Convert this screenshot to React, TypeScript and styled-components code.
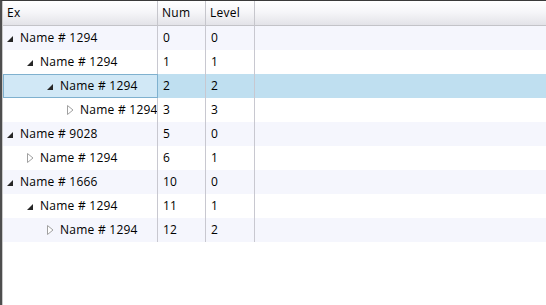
import React from "react";
import styled, {createGlobalStyle} from "styled-components";

type Row = {
  name: string
  num: number
  level: number
  expanded: boolean
}

const rows: Row[] = [
  {name: 'Name # 1294', num: 0, level: 0, expanded: true},
  {name: 'Name # 1294', num: 1, level: 1, expanded: true},
  {name: 'Name # 1294', num: 2, level: 2, expanded: true},
  {name: 'Name # 1294', num: 3, level: 3, expanded: false},
  {name: 'Name # 9028', num: 5, level: 0, expanded: true},
  {name: 'Name # 1294', num: 6, level: 1, expanded: false},
  {name: 'Name # 1666', num: 10, level: 0, expanded: true},
  {name: 'Name # 1294', num: 11, level: 1, expanded: true},
  {name: 'Name # 1294', num: 12, level: 2, expanded: false},
]

const selectedIndex = 2;

const GlobalStyle = createGlobalStyle`
  html, body {
    margin: 0;
    padding: 0;
    background: #fff;
  }
  body {
    font-family: "Open Sans", "DejaVu Sans", sans-serif;
    font-size: 12px;
    letter-spacing: 0.25px;
    color: #000;
  }
`

const Frame = styled.div`
  width: 546px;
  height: 305px;
  box-sizing: border-box;
  border-top: 1px solid #3a3a3a;
  border-left: 2px solid #4e4e4e;
  overflow: hidden;
  background: #fff;
`

const Inner = styled.div`
  height: 100%;
  border-left: 1px solid #c9c9c9;
`

const Grid = styled.div`
  display: grid;
  grid-template-columns: 155px 48px 49px 1fr;
`

const HeaderCell = styled.div<{ $last?: boolean }>`
  height: 24px;
  line-height: 24px;
  padding-left: 4px;
  background: linear-gradient(#ffffff, #f6f6f9 45%, #e3e3e8);
  border-bottom: 1px solid #c3c3c8;
  border-right: ${p => p.$last ? 'none' : '1px solid #c6c6cc'};
  white-space: nowrap;
`

const Cell = styled.div<{ $alt: boolean, $selected: boolean, $last?: boolean }>`
  height: 24px;
  line-height: 24px;
  padding-left: 5px;
  box-sizing: border-box;
  white-space: nowrap;
  overflow: hidden;
  background: ${p => p.$selected ? '#bfdff0' : p.$alt ? '#f5f6fd' : '#ffffff'};
  border-right: ${p => p.$last ? 'none' : '1px solid #c8c8d0'};
`

const NameCell = styled(Cell)<{ $level: number, $focus: boolean }>`
  display: flex;
  align-items: center;
  padding-left: ${p => 4 + p.$level * 20}px;
  ${p => p.$focus && `
    background: #d1e8f6;
    border: 1px solid #7fb1cf;
    padding-left: ${3 + p.$level * 20}px;
  `}
`

const Toggle = styled.span`
  display: inline-flex;
  width: 13px;
  height: 22px;
  align-items: center;
  flex-shrink: 0;
`

const Expander = ({open}: { open: boolean }) => (
  <Toggle>
    {open ? (
      <svg width="6" height="6" viewBox="0 0 6 6" style={{marginTop: 2}}>
        <path d="M6 0 L6 6 L0 6 Z" fill="#262626"/>
      </svg>
    ) : (
      <svg width="7" height="10" viewBox="0 0 7 10">
        <path d="M0.5 0.5 L6 5 L0.5 9.5 Z" fill="#fff" stroke="#a0a0a0" strokeWidth="1"/>
      </svg>
    )}
  </Toggle>
)

const App: React.FC = () => {
  return (
    <Frame>
      <GlobalStyle/>
      <Inner>
        <Grid>
          <HeaderCell>Ex</HeaderCell>
          <HeaderCell>Num</HeaderCell>
          <HeaderCell>Level</HeaderCell>
          <HeaderCell $last/>
          {rows.map((row, i) => {
            const alt = i % 2 === 0;
            const sel = i === selectedIndex;
            return (
              <React.Fragment key={i}>
                <NameCell $alt={alt} $selected={sel} $focus={sel} $level={row.level}>
                  <Expander open={row.expanded}/>
                  <span>{row.name}</span>
                </NameCell>
                <Cell $alt={alt} $selected={sel}>{row.num}</Cell>
                <Cell $alt={alt} $selected={sel}>{row.level}</Cell>
                <Cell $alt={alt} $selected={sel} $last/>
              </React.Fragment>
            )
          })}
        </Grid>
      </Inner>
    </Frame>
  )
}

export default App
